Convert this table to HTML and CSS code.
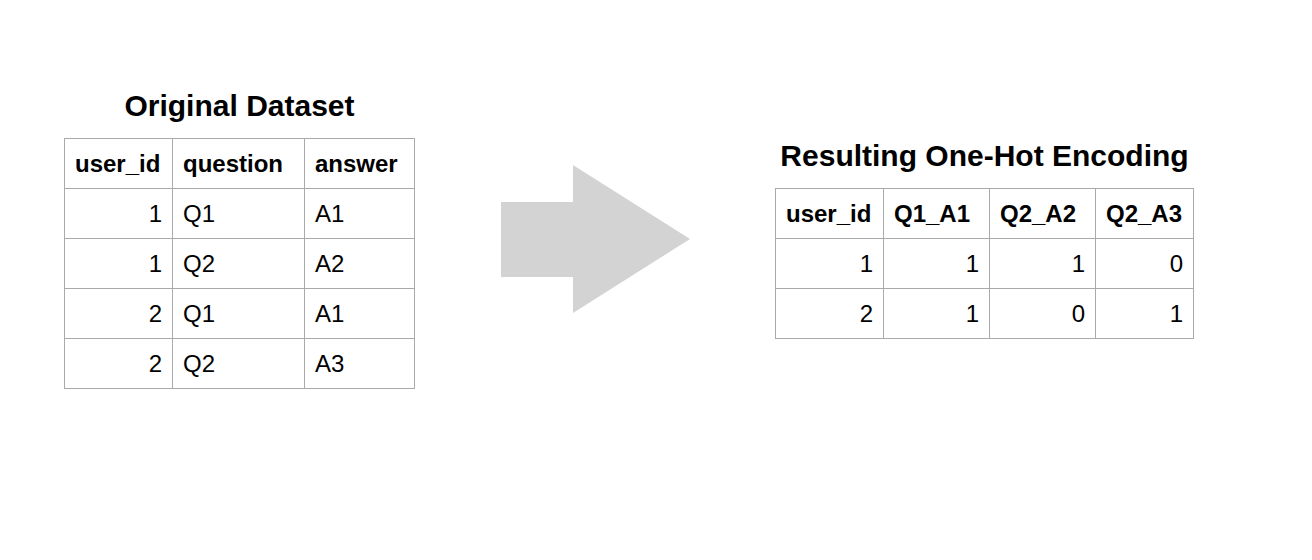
FILE: index.html
```html
<!DOCTYPE html>
<html lang="en">
<head>
<meta charset="utf-8">
<title>One-Hot Encoding</title>
<link rel="stylesheet" href="styles.css">
</head>
<body>
<div class="stage">
  <section class="block">
    <h2 class="title">Original Dataset</h2>
    <table class="grid grid-orig">
      <colgroup><col class="c108"><col class="c132"><col class="c110"></colgroup>
      <thead>
        <tr><th>user_id</th><th>question</th><th>answer</th></tr>
      </thead>
      <tbody>
        <tr><td class="num">1</td><td>Q1</td><td>A1</td></tr>
        <tr><td class="num">1</td><td>Q2</td><td>A2</td></tr>
        <tr><td class="num">2</td><td>Q1</td><td>A1</td></tr>
        <tr><td class="num">2</td><td>Q2</td><td>A3</td></tr>
      </tbody>
    </table>
  </section>

  <svg class="arrow" width="189" height="148" viewBox="0 0 189 148" aria-hidden="true">
    <polygon points="0,37 72,37 72,0 189,74 72,148 72,112 0,112" fill="#d3d3d3"/>
  </svg>

  <section class="block">
    <h2 class="title">Resulting One-Hot Encoding</h2>
    <table class="grid grid-hot">
      <colgroup><col class="c108"><col class="c106"><col class="c106"><col class="c98"></colgroup>
      <thead>
        <tr><th>user_id</th><th>Q1_A1</th><th>Q2_A2</th><th>Q2_A3</th></tr>
      </thead>
      <tbody>
        <tr><td class="num">1</td><td class="num">1</td><td class="num">1</td><td class="num">0</td></tr>
        <tr><td class="num">2</td><td class="num">1</td><td class="num">0</td><td class="num">1</td></tr>
      </tbody>
    </table>
  </section>
</div>
</body>
</html>
```

FILE: styles.css
```css
html, body {
  margin: 0;
  padding: 0;
  background: #ffffff;
}

body {
  font-family: "Liberation Sans", Arial, Helvetica, sans-serif;
  color: #000000;
}

.stage {
  display: flex;
  align-items: center;
  height: 478px;
  padding-left: 64px;
  gap: 86px;
}

.arrow {
  flex: none;
  display: block;
  margin-right: -1px;
}

.block {
  display: flex;
  flex-direction: column;
  align-items: center;
}

.title {
  margin: 0 0 15px 0;
  font-size: 30px;
  font-weight: bold;
  line-height: 34px;
  white-space: nowrap;
}

.grid {
  border-collapse: collapse;
  table-layout: fixed;
  font-size: 24px;
}

.grid-orig { width: 350px; }
.grid-hot { width: 418px; }

.c108 { width: 108px; }
.c132 { width: 132px; }
.c110 { width: 110px; }
.c106 { width: 106px; }
.c98 { width: 98px; }

.grid th,
.grid td {
  border: 1px solid #aaaaaa;
  height: 50px;
  padding: 0 10px;
  line-height: 28px;
  box-sizing: border-box;
  vertical-align: middle;
  text-align: left;
  white-space: nowrap;
}

.grid th {
  font-weight: bold;
}

.grid td.num {
  text-align: right;
}
```
